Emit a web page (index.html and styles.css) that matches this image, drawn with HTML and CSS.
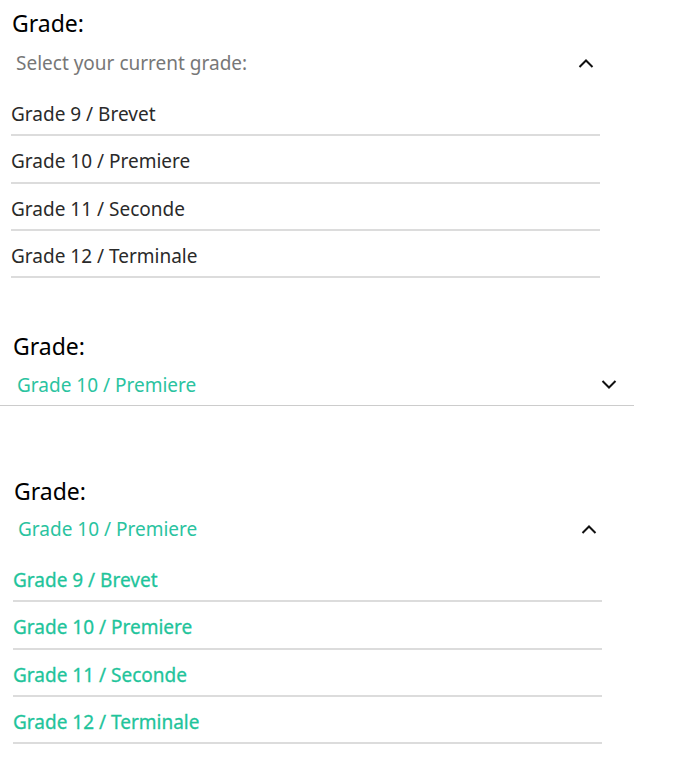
FILE: index.html
```html
<!DOCTYPE html>
<html>
<head>
<meta charset="utf-8">
<link rel="stylesheet" href="styles.css">
</head>
<body>
<div class="select s1">
  <div class="label">Grade:</div>
  <div class="head">
    <span class="value placeholder">Select your current grade:</span>
    <svg class="chev" width="16" height="9" viewBox="0 0 16 9"><polyline points="1.5,8 8,1.5 14.5,8" fill="none" stroke="#111" stroke-width="2"/></svg>
  </div>
  <ul class="options">
    <li>Grade 9 / Brevet</li>
    <li>Grade 10 / Premiere</li>
    <li>Grade 11 / Seconde</li>
    <li>Grade 12 / Terminale</li>
  </ul>
</div>

<div class="select s2">
  <div class="label">Grade:</div>
  <div class="head">
    <span class="value selected">Grade 10 / Premiere</span>
    <svg class="chev" width="16" height="9" viewBox="0 0 16 9"><polyline points="1.5,1 8,7.5 14.5,1" fill="none" stroke="#111" stroke-width="2"/></svg>
  </div>
</div>

<div class="select s3">
  <div class="label">Grade:</div>
  <div class="head">
    <span class="value selected">Grade 10 / Premiere</span>
    <svg class="chev" width="16" height="9" viewBox="0 0 16 9"><polyline points="1.5,8 8,1.5 14.5,8" fill="none" stroke="#111" stroke-width="2"/></svg>
  </div>
  <ul class="options teal">
    <li>Grade 9 / Brevet</li>
    <li>Grade 10 / Premiere</li>
    <li>Grade 11 / Seconde</li>
    <li>Grade 12 / Terminale</li>
  </ul>
</div>
</body>
</html>
```
FILE: styles.css
```css
html, body {
  margin: 0;
  padding: 0;
  background: #fff;
}
body {
  font-family: "Noto Sans", "Open Sans", sans-serif;
  color: #222;
}
.select {
  box-sizing: border-box;
}
.label {
  font-size: 23px;
  line-height: 26px;
  color: #000;
}
.head {
  display: flex;
  align-items: center;
  justify-content: space-between;
  height: 40px;
  margin-top: 7px;
}
.value {
  font-size: 19px;
  padding-left: 5px;
}
.placeholder {
  color: #777;
}
.selected {
  color: #2ac3a0;
}
.chev {
  display: block;
}
.options {
  list-style: none;
  margin: 6px 0 0;
  padding: 0;
}
.options li {
  height: 39.3px;
  padding-top: 6px;
  line-height: 39px;
  border-bottom: 2px solid #dcdcdc;
  font-size: 19px;
  color: #2a2a2a;
  white-space: nowrap;
}
.options.teal li {
  color: #1fc49b;
  -webkit-text-stroke: 0.3px #1fc49b;
}

.s1 {
  width: 600px;
  padding: 10px 0 0 11px;
}
.s1 .label { padding-left: 1px; }
.s1 .chev { margin-right: 6px; }

.s2 {
  width: 634px;
  margin-top: 55px;
}
.s2 .label { padding-left: 13px; }
.s2 .head {
  height: 41px;
  margin-top: 5px;
  border-bottom: 1px solid #cccccc;
  padding: 0 17px 0 12px;
}

.s3 {
  width: 602px;
  margin-top: 72px;
  padding: 0 0 0 13px;
}
.s3 .label { padding-left: 1px; }
.s3 .head { margin-top: 5px; padding-right: 5px; }
.s3 .options { margin-top: 6px; }
```
